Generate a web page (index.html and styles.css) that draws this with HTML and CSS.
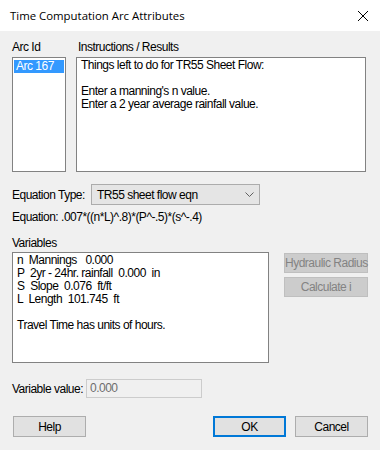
FILE: index.html
```html
<!DOCTYPE html>
<html lang="en">
<head>
    <meta charset="UTF-8">
    <meta name="viewport" content="width=device-width, initial-scale=1.0">
    <title>Time Computation Arc Attributes</title>
    <link rel="stylesheet" href="styles.css">
</head>
<body>
    <div class="titlebar">
        <span class="title">Time Computation Arc Attributes</span>
        <svg class="close" width="12" height="12" viewBox="0 0 12 12">
            <path d="M1 1 L11 11 M11 1 L1 11" stroke="#000" stroke-width="1" fill="none"/>
        </svg>
    </div>
    <div class="dialog">
        <div class="top-row">
            <div class="arc-col">
                <div class="label">Arc Id</div>
                <div class="listbox">
                    <div class="list-item selected">Arc 167</div>
                </div>
            </div>
            <div class="instr-col">
                <div class="label">Instructions / Results</div>
                <div class="textbox instructions">Things left to do for TR55 Sheet Flow:<br><br>Enter a manning's n value.<br>Enter a 2 year average rainfall value.</div>
            </div>
        </div>

        <div class="eq-type-row">
            <span class="eq-type-label">Equation Type:</span>
            <div class="combo">
                <span>TR55 sheet flow eqn</span>
                <svg class="chevron" width="9" height="5" viewBox="0 0 9 5">
                    <path d="M0.5 0.5 L4.5 4.5 L8.5 0.5" stroke="#606060" stroke-width="1" fill="none"/>
                </svg>
            </div>
        </div>
        <div class="equation">Equation: .007*((n*L)^.8)*(P^-.5)*(s^-.4)</div>

        <div class="label vars-label">Variables</div>
        <div class="vars-row">
            <div class="textbox variables">n  Mannings   0.000
P  2yr - 24hr. rainfall  0.000  in
S  Slope  0.076  ft/ft
L  Length  101.745  ft

Travel Time has units of hours.</div>
            <div class="side-buttons">
                <button class="side-btn" disabled>Hydraulic Radius</button>
                <button class="side-btn" disabled>Calculate i</button>
            </div>
        </div>

        <div class="value-row">
            <span class="value-label">Variable value:</span>
            <div class="value-input">0.000</div>
        </div>

        <div class="button-row">
            <button class="btn help">Help</button>
            <button class="btn ok">OK</button>
            <button class="btn">Cancel</button>
        </div>
    </div>
</body>
</html>
```
FILE: styles.css
```css
body {
    margin: 0;
    width: 380px;
    height: 450px;
    background: #f0f0f0;
    font-family: "Liberation Sans", Arial, sans-serif;
    font-size: 12px;
    letter-spacing: -0.5px;
    color: #000;
    overflow: hidden;
    white-space: nowrap;
}

.titlebar {
    height: 31px;
    background: #fff;
    display: flex;
    align-items: center;
    padding: 0 11px 0 10px;
}

.title {
    font-family: "Open Sans", "Liberation Sans", sans-serif;
    font-size: 11.4px;
    letter-spacing: 0;
    flex: 1;
}

.close {
    display: block;
}

.dialog {
    padding: 0 12px;
}

.label {
    height: 13px;
    line-height: 13px;
}

/* top row: arc list + instructions */
.top-row {
    display: flex;
    margin-top: 10px;
}

.arc-col {
    width: 54px;
}

.instr-col {
    width: 290px;
    margin-left: 10px;
}

.instr-col .label {
    margin-left: 2px;
}

.listbox,
.textbox {
    margin-top: 3px;
    height: 115px;
    box-sizing: border-box;
    background: #fff;
    border: 1px solid #828282;
}

.listbox {
    padding: 2px 1px;
}

.list-item {
    height: 13px;
    line-height: 13px;
    padding-left: 2px;
}

.list-item.selected {
    background: #3399ff;
    color: #fff;
}

.instructions {
    padding: 1px 4px;
    line-height: 13px;
}

/* equation type */
.eq-type-row {
    display: flex;
    align-items: center;
    margin-top: 12px;
}

.eq-type-label {
    width: 79px;
}

.combo {
    width: 169px;
    height: 21px;
    box-sizing: border-box;
    display: flex;
    align-items: center;
    justify-content: space-between;
    padding: 0 5px 0 5px;
    background: #e5e5e5;
    border: 1px solid #acacac;
}

.chevron {
    display: block;
}

.equation {
    margin-top: 6px;
    line-height: 13px;
}

.vars-label {
    margin-top: 13px;
}

/* variables */
.vars-row {
    display: flex;
    margin-top: 2px;
}

.variables {
    margin-top: 0;
    width: 257px;
    height: 111px;
    padding: 1px 4px;
    line-height: 13px;
    white-space: pre;
}

.side-buttons {
    display: flex;
    flex-direction: column;
    gap: 4px;
    margin-left: 15px;
    margin-top: 1px;
}

.side-btn {
    width: 84px;
    height: 20px;
    padding: 0;
    font-family: inherit;
    font-size: 12px;
    letter-spacing: -0.5px;
    white-space: nowrap;
    color: #838383;
    background: #cccccc;
    border: 1px solid #bfbfbf;
}

/* variable value */
.value-row {
    display: flex;
    align-items: center;
    margin-top: 16px;
}

.value-label {
    width: 74px;
}

.value-input {
    width: 116px;
    height: 19px;
    box-sizing: border-box;
    line-height: 17px;
    padding-left: 3px;
    color: #6d6d6d;
    background: #f0f0f0;
    border: 1px solid #cccccc;
}

/* bottom buttons */
.button-row {
    display: flex;
    margin-top: 18px;
    gap: 9px;
}

.btn {
    width: 73px;
    height: 21px;
    padding: 0;
    font-family: inherit;
    font-size: 12px;
    letter-spacing: -0.5px;
    color: #000;
    background: #e1e1e1;
    border: 1px solid #adadad;
}

.btn.help {
    margin-left: 1px;
    margin-right: auto;
}

.btn.ok {
    border: 2px solid #0078d7;
}
```
